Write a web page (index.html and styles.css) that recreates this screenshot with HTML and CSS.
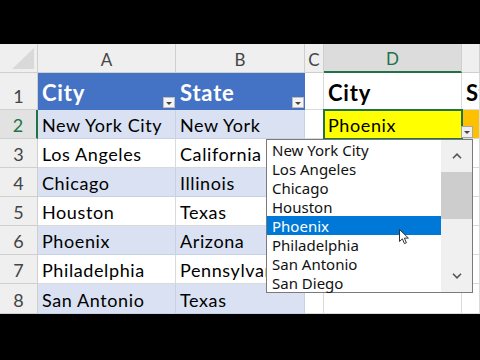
FILE: index.html
```html
<!DOCTYPE html>
<html lang="en">
<head>
    <meta charset="UTF-8">
    <title>Data Validation List</title>
    <link rel="stylesheet" href="styles.css">
</head>
<body>
<div class="frame">
    <div class="bar"></div>
    <div class="sheet">
        <div class="grid">
            <!-- column letters -->
            <div class="corner"><span class="tri"></span></div>
            <div class="colhead">A</div>
            <div class="colhead">B</div>
            <div class="colhead">C</div>
            <div class="colhead active">D</div>
            <div class="colhead"></div>
            <!-- row 1 -->
            <div class="rowhead">1</div>
            <div class="cell th"><span>City</span><i class="filter"></i></div>
            <div class="cell th"><span>State</span><i class="filter"></i></div>
            <div class="cell"></div>
            <div class="cell bold">City</div>
            <div class="cell bold">St</div>
            <!-- row 2 -->
            <div class="rowhead active">2</div>
            <div class="cell band">New York City</div>
            <div class="cell band">New York</div>
            <div class="cell"></div>
            <div class="cell pick">Phoenix<i class="pick-btn"></i></div>
            <div class="cell gold"></div>
            <!-- row 3 -->
            <div class="rowhead">3</div>
            <div class="cell">Los Angeles</div>
            <div class="cell">California</div>
            <div class="cell"></div>
            <div class="cell"></div>
            <div class="cell"></div>
            <!-- row 4 -->
            <div class="rowhead">4</div>
            <div class="cell band">Chicago</div>
            <div class="cell band">Illinois</div>
            <div class="cell"></div>
            <div class="cell"></div>
            <div class="cell"></div>
            <!-- row 5 -->
            <div class="rowhead">5</div>
            <div class="cell">Houston</div>
            <div class="cell">Texas</div>
            <div class="cell"></div>
            <div class="cell"></div>
            <div class="cell"></div>
            <!-- row 6 -->
            <div class="rowhead">6</div>
            <div class="cell band">Phoenix</div>
            <div class="cell band">Arizona</div>
            <div class="cell"></div>
            <div class="cell"></div>
            <div class="cell"></div>
            <!-- row 7 -->
            <div class="rowhead">7</div>
            <div class="cell">Philadelphia</div>
            <div class="cell">Pennsylvania</div>
            <div class="cell"></div>
            <div class="cell"></div>
            <div class="cell"></div>
            <!-- row 8 -->
            <div class="rowhead">8</div>
            <div class="cell band">San Antonio</div>
            <div class="cell band">Texas</div>
            <div class="cell"></div>
            <div class="cell"></div>
            <div class="cell"></div>
        </div>

        <!-- validation dropdown -->
        <div class="list">
            <ul>
                <li>New York City</li>
                <li>Los Angeles</li>
                <li>Chicago</li>
                <li>Houston</li>
                <li class="on">Phoenix</li>
                <li>Philadelphia</li>
                <li>San Antonio</li>
                <li>San Diego</li>
            </ul>
            <div class="scroll">
                <div class="arrow"><svg width="10" height="6" viewBox="0 0 10 6"><polyline points="1,5.2 5,1.2 9,5.2" fill="none" stroke="#555" stroke-width="1.6"/></svg></div>
                <div class="thumb"></div>
                <div class="track"></div>
                <div class="arrow"><svg width="10" height="6" viewBox="0 0 10 6"><polyline points="1,0.8 5,4.8 9,0.8" fill="none" stroke="#555" stroke-width="1.6"/></svg></div>
            </div>
        </div>

        <svg class="cursor" width="11" height="16" viewBox="0 0 11 16">
            <path d="M0.5 0.5 L0.5 12.5 L3.4 9.8 L5.4 14.6 L7.4 13.8 L5.4 9.1 L9.4 9.1 Z" fill="#fff" stroke="#333" stroke-width="1" stroke-linejoin="round"/>
        </svg>
    </div>
    <div class="bar"></div>
</div>
</body>
</html>
```

FILE: styles.css
```css
* {
    margin: 0;
    padding: 0;
    box-sizing: border-box;
}
html,body {
    height: 100%;
    background: #000;
}
body {
    font-family: Lato, "Open Sans", sans-serif;
}
.frame {
    display: flex;
    flex-direction: column;
    width: 480px;
    height: 360px;
}
.bar {
    height: 44px;
    background: #000;
}
.bar:last-child {
    flex: 1;
}
.sheet {
    position: relative;
    background: #fff;
}
.grid {
    display: grid;
    grid-template-columns: 38px 138px 129px 19px 138px 18px;
    grid-template-rows: 29px 37px repeat(6, 29px) 30px;
}
.grid > div {
    border-right: 1px solid #dadada;
    border-bottom: 1px solid #dadada;
    overflow: hidden;
    white-space: nowrap;
}

/* headers */
.corner {
    background: #efefef;
    display: flex;
    justify-content: flex-end;
    align-items: flex-end;
    border-color: #cfcfcf !important;
}
.tri {
    width: 22px;
    height: 21px;
    margin: 0 3px 3px 0;
    background: #d9d9d9;
    clip-path: polygon(100% 0, 100% 100%, 0 100%);
}
.colhead {
    background: #efefef;
    color: #444;
    font-size: 17px;
    display: flex;
    justify-content: center;
    align-items: center;
    padding-top: 2px;
    border-color: #cfcfcf !important;
}
.colhead.active {
    background: #dcdcdc;
    color: #217346;
    border-bottom: 2px solid #217346 !important;
}
.rowhead {
    background: #efefef;
    color: #444;
    font-size: 18px;
    line-height: 22px;
    display: flex;
    justify-content: center;
    align-items: flex-end;
    padding-bottom: 2px;
    border-color: #cfcfcf !important;
}
.rowhead.active {
    background: #e2e2e2;
    color: #217346;
    border-right: 2px solid #217346 !important;
}

/* cells */
.cell {
    display: flex;
    align-items: flex-end;
    font-size: 18px;
    line-height: 22px;
    letter-spacing: 0.6px;
    padding: 0 0 2px 4px;
    color: #000;
}
.band {
    background: #d9e1f2;
    border-color: #c8d2e6 !important;
}
.th {
    background: #4472c4;
    color: #fff;
    font-weight: 700;
    font-size: 22px;
    line-height: 26px;
    letter-spacing: 0.8px;
    justify-content: space-between;
    padding: 0 0 1px 4px;
    border-color: #4472c4 !important;
}
.th span {
    padding-bottom: 2px;
}
.filter {
    width: 12px;
    height: 11px;
    background: #f4f4f4;
    border: 1px solid #bdbdbd;
    display: flex;
    justify-content: center;
    align-items: flex-end;
    padding-bottom: 2px;
}
.filter::after,.pick-btn::after {
    content: "";
    border-left: 3px solid transparent;
    border-right: 3px solid transparent;
    border-top: 3px solid #444;
}
.bold {
    font-weight: 700;
    font-size: 22px;
    line-height: 26px;
    letter-spacing: 0.8px;
    padding-bottom: 3px;
}
.pick {
    position: relative;
    overflow: visible !important;
    background: #ffff00;
    outline: 2px solid #217346;
    outline-offset: -1px;
}
.pick-btn {
    position: absolute;
    right: -12px;
    bottom: 0;
    width: 12px;
    height: 12px;
    background: #efefef;
    border: 1px solid #a6a6a6;
    display: flex;
    justify-content: center;
    align-items: center;
}
.gold {
    background: #ffc000;
}

/* dropdown list */
.list {
    position: absolute;
    left: 266px;
    top: 95px;
    width: 207px;
    height: 154px;
    background: #fff;
    border: 1px solid #7a7a7a;
    display: flex;
    font-family: "Noto Sans", "Open Sans", sans-serif;
    font-size: 15px;
}
.list ul {
    list-style: none;
    flex: 1;
}
.list li {
    height: 19px;
    line-height: 20px;
    padding-left: 5px;
    color: #111;
    white-space: nowrap;
}
.list li.on {
    background: #0078d7;
    color: #fff;
}
.scroll {
    width: 31px;
    background: #f0f0f0;
    display: flex;
    flex-direction: column;
}
.arrow {
    height: 32px;
    display: flex;
    justify-content: center;
    align-items: center;
}
.thumb {
    height: 47px;
    background: #cdcdcd;
}
.track {
    flex: 1;
}
.cursor {
    position: absolute;
    left: 399px;
    top: 185px;
}
```
